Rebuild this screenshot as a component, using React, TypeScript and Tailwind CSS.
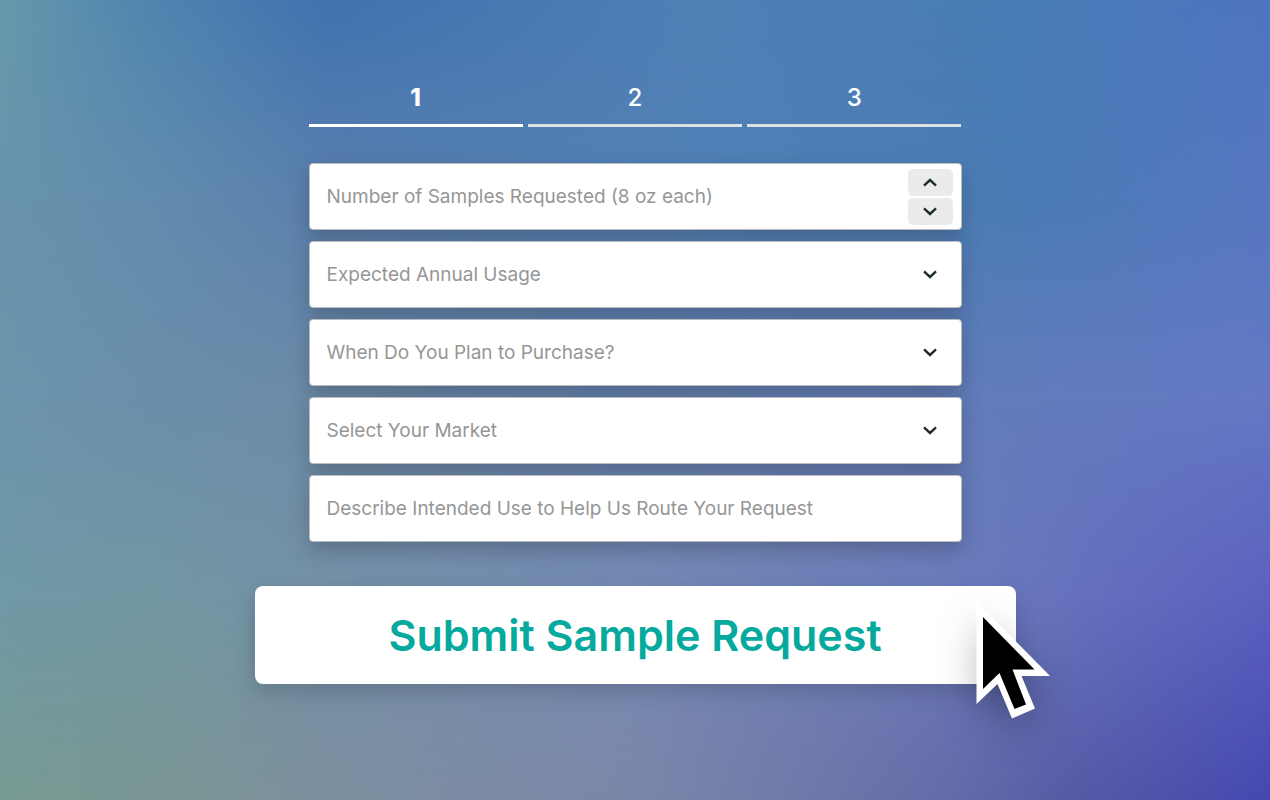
import React, { useState } from 'react';
import clsx from 'clsx';

interface SelectFieldProps {
  id: string;
  label: string;
  options: string[];
}

const fieldBox = 'h-[67px] w-full rounded-[4px] border border-[#b9bcc0] bg-white shadow-[0_8px_20px_rgba(50,55,70,0.35)]';
const fieldText = "font-['Inter',sans-serif] text-[19px] leading-6";

// Colour bands, top to bottom. Each one fades in over the band above it.
const bands = [
  'bg-[linear-gradient(to_right,#6799ac,#4f85af_12%,#4072b0_26%,#5080b5_55%,#487db6_80%,#4f75c0)]',
  'bg-[linear-gradient(to_right,#6893ab,#638cae_12%,#5b80ad_25%,#5080b5_55%,#4a7cb5_80%,#5777c0)] mask-[linear-gradient(to_bottom,transparent_0%,black_25%)]',
  'bg-[linear-gradient(to_right,#6c94ac,#6b8faa_12%,#6d8ca8_25%,#6582b0_50%,#627cba_76%,#6478c4)] mask-[linear-gradient(to_bottom,transparent_25%,black_50%)]',
  'bg-[linear-gradient(to_right,#7099a6,#7297a2_12%,#7491a6_25%,#768ab4_50%,#6b7abb_76%,#5b60bf)] mask-[linear-gradient(to_bottom,transparent_50%,black_75%)]',
  'bg-[linear-gradient(to_right,#779a92,#7a9594_14%,#7c8f9e_25%,#7c86a9_50%,#666ca8_74%,#565ba5_84%,#4448b0)] mask-[linear-gradient(to_bottom,transparent_75%,black_100%)]'
];

const Chevron: React.FC<{ up?: boolean }> = ({ up }) => {
  return <svg viewBox="0 0 14 9" className="h-[9px] w-[14px]" fill="none" stroke="#1f2c30" strokeWidth="2.4" aria-hidden="true">
      <path d={up ? 'M1 7.6 L7 2 L13 7.6' : 'M1 1.4 L7 7 L13 1.4'} />
    </svg>;
};

const SelectField: React.FC<SelectFieldProps> = ({ id, label, options }) => {
  return <div className={clsx(fieldBox, 'grid items-center')}>
      <select id={id} aria-label={label} defaultValue="" className={clsx(fieldText, 'col-start-1 row-start-1 h-full w-full appearance-none rounded-[4px] bg-transparent px-[17px] text-[#969696] outline-none')}>
        <option value="" disabled>{label}</option>
        {options.map(option => <option key={option} value={option}>{option}</option>)}
      </select>
      <span className="pointer-events-none col-start-1 row-start-1 mr-6 justify-self-end">
        <Chevron />
      </span>
    </div>;
};

const Steps: React.FC<{ current: number }> = ({ current }) => {
  return <ol className="grid grid-cols-3 gap-[5px] text-center text-2xl text-white">
      {[1, 2, 3].map(step => <li key={step} className={clsx('border-b-[3px] pb-[10px]', step === current ? 'border-white font-extrabold' : 'border-[#dfe0e3] font-medium')}>
          {step}
        </li>)}
    </ol>;
};

const SampleCountField: React.FC = () => {
  const [count, setCount] = useState('');
  const step = (amount: number) => setCount(String(Math.max(0, (parseInt(count) || 0) + amount)));
  return <div className={clsx(fieldBox, 'flex items-center pr-2')}>
      <input id="samples" type="number" aria-label="Number of Samples Requested (8 oz each)" min={0} value={count} onChange={e => setCount(e.target.value)} placeholder="Number of Samples Requested (8 oz each)" className={clsx(fieldText, 'h-full min-w-0 flex-1 appearance-none rounded-[4px] pl-[17px] text-[#333333] outline-none placeholder:text-[#969696] [&::-webkit-inner-spin-button]:appearance-none')} />
      <div className="flex flex-col gap-[2px]">
        <button type="button" aria-label="Increase" onClick={() => step(1)} className="flex h-[27px] w-[45px] items-center justify-center rounded-[5px] bg-[#ebebeb]">
          <Chevron up />
        </button>
        <button type="button" aria-label="Decrease" onClick={() => step(-1)} className="flex h-[27px] w-[45px] items-center justify-center rounded-[5px] bg-[#ebebeb]">
          <Chevron />
        </button>
      </div>
    </div>;
};

const Cursor: React.FC = () => {
  return <svg viewBox="0 0 74 118" className="pointer-events-none absolute -right-[34px] top-[15px] h-[118px] w-[74px] overflow-visible drop-shadow-[0_16px_18px_rgba(0,0,0,0.25)]" aria-hidden="true">
      <path d="M0.5 0.5 L74 75 H45.5 L59 107.5 L36 117.5 L21.5 83 L0.5 103 Z" fill="#fff" />
      <path d="M7 16 L58.5 68.5 H36.5 L50 103.5 L38.5 108 L23.5 72 L7 88 Z" fill="#000" />
    </svg>;
};

const App: React.FC = () => {
  return <main className="grid min-h-screen grid-cols-1 font-['Inter',sans-serif]">
      {bands.map(band => <div key={band} className={clsx('col-start-1 row-start-1', band)} />)}
      <form className="z-10 col-start-1 row-start-1 mx-auto flex w-full max-w-[793px] flex-col px-4 pb-16 pt-[82px]" onSubmit={e => e.preventDefault()}>
        <div className="mx-auto w-full max-w-[653px]">
          <Steps current={1} />
          <div className="mt-9 flex flex-col gap-[11px]">
            <SampleCountField />
            <SelectField id="usage" label="Expected Annual Usage" options={['Under 1,000 lbs', '1,000 - 10,000 lbs', 'Over 10,000 lbs']} />
            <SelectField id="purchase" label="When Do You Plan to Purchase?" options={['Within 3 months', 'Within 6 months', 'Within a year']} />
            <SelectField id="market" label="Select Your Market" options={['Food', 'Personal Care', 'Industrial']} />
            <div className={fieldBox}>
              <input id="description" type="text" aria-label="Describe Intended Use to Help Us Route Your Request" placeholder="Describe Intended Use to Help Us Route Your Request" className={clsx(fieldText, 'h-full w-full rounded-[4px] px-[17px] text-[#333333] outline-none placeholder:text-[#969696]')} />
            </div>
          </div>
        </div>
        <div className="relative mt-11">
          <button type="submit" className="h-[98px] w-full rounded-lg bg-white text-[43px] font-semibold leading-[52px] text-[#05a99d] shadow-[0_8px_20px_rgba(40,50,70,0.25)]">
            Submit Sample Request
          </button>
          <Cursor />
        </div>
      </form>
    </main>;
};

export default App;
